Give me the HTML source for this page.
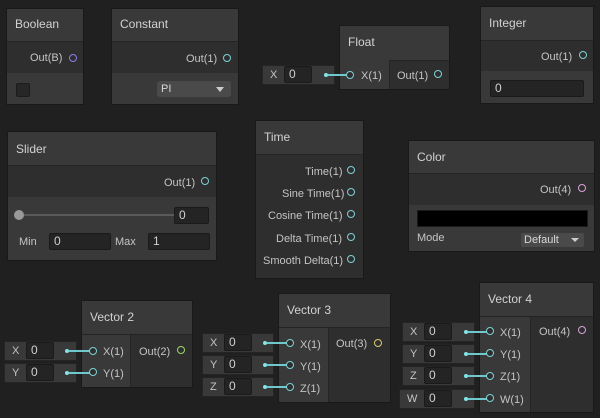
<!DOCTYPE html>
<html><head><meta charset="utf-8"><style>
*{box-sizing:border-box;margin:0;padding:0}
body{width:600px;height:418px;background:#202020;position:relative;overflow:hidden;font-family:"Liberation Sans",sans-serif;font-size:11px;color:#c4c4c4}
.a{position:absolute}
.node{position:absolute;background:#2e2e2e;border:1px solid #191919;z-index:1}
.hd{position:absolute;left:0;right:0;top:0;background:#393939;border-bottom:1px solid #242424;font-size:12px;color:#d2d2d2;padding-left:8px}
.ext{position:absolute;left:0;right:0;bottom:0;background:#393939}
.inc{position:absolute;left:0;bottom:0;background:#393939;border-right:1px solid #242424}
.t{position:absolute;white-space:nowrap;line-height:12px;z-index:3}
.pc{position:absolute;width:8px;height:8px;border-radius:50%;border:1.5px solid #7fd2d6;z-index:4;background:#2e2e2e}
.fld{position:absolute;background:#242424;border:1px solid #1a1a1a;border-radius:2px;padding-left:4px;color:#d0d0d0;font-size:12px;z-index:3}
.inp{position:absolute;background:#393939;border:1px solid #242424;height:20px}
.dot{position:absolute;width:4px;height:4px;border-radius:50%;background:#84e4e7;z-index:3}
.ln{position:absolute;height:2px;background:#6fc9cc;z-index:3}
</style></head><body>

<!-- Boolean -->
<div class="node" style="left:6px;top:8px;width:78px;height:97px">
<div class="hd" style="height:33px;line-height:31px">Boolean</div>
<div class="ext" style="height:31px"></div>
<div class="a" style="left:9px;top:74px;width:14px;height:14px;background:#272727;border:1px solid #1c1c1c;border-radius:2px"></div>
</div>
<div class="t" style="left:30px;top:52px">Out(B)</div>
<div class="pc" style="left:69px;top:54px;border-color:#8c7fe6"></div>

<!-- Constant -->
<div class="node" style="left:111px;top:8px;width:128px;height:97px">
<div class="hd" style="height:33px;line-height:31px">Constant</div>
<div class="ext" style="height:31px"></div>
<div class="a" style="left:45px;top:72px;width:74px;height:16px;background:#4a4a4a;border-radius:3px;padding-left:4px;line-height:16px;color:#d8d8d8">PI<span class="a" style="right:7px;top:6px;border-left:4px solid transparent;border-right:4px solid transparent;border-top:5px solid #ccc"></span></div>
</div>
<div class="t" style="left:186px;top:53px">Out(1)</div>
<div class="pc" style="left:223px;top:54px"></div>

<!-- Float -->
<div class="inp" style="left:262px;top:65px;width:73px"></div>
<div class="t" style="left:270px;top:69px">X</div>
<div class="fld" style="left:284px;top:66px;width:28px;height:17px;line-height:15px">0</div>
<div class="dot" style="left:324px;top:73px"></div>
<div class="ln" style="left:328px;top:74px;width:19px"></div>
<div class="node" style="left:339px;top:25px;width:111px;height:65px">
<div class="hd" style="height:35px;line-height:33px">Float</div>
<div class="inc" style="width:50px;height:29px"></div>
</div>
<div class="pc" style="left:346px;top:71px"></div>
<div class="t" style="left:361px;top:70px">X(1)</div>
<div class="t" style="left:397px;top:70px">Out(1)</div>
<div class="pc" style="left:434px;top:70px"></div>

<!-- Integer -->
<div class="node" style="left:480px;top:6px;width:114px;height:98px">
<div class="hd" style="height:34px;line-height:32px">Integer</div>
<div class="ext" style="height:32px"></div>
<div class="fld" style="left:9px;top:73px;width:94px;height:17px;line-height:15px">0</div>
</div>
<div class="t" style="left:541px;top:51px">Out(1)</div>
<div class="pc" style="left:579px;top:51px"></div>

<!-- Slider -->
<div class="node" style="left:7px;top:131px;width:210px;height:130px">
<div class="hd" style="height:34px;line-height:34px">Slider</div>
<div class="ext" style="height:63px"></div>
<div class="a" style="left:10px;top:82px;width:156px;height:2px;background:#5a5a5a"></div>
<div class="a" style="left:6px;top:78px;width:10px;height:10px;border-radius:50%;background:#999"></div>
<div class="fld" style="left:166px;top:75px;width:35px;height:17px;line-height:15px">0</div>
<div class="t" style="left:11px;top:104px">Min</div>
<div class="fld" style="left:41px;top:101px;width:62px;height:17px;line-height:15px">0</div>
<div class="t" style="left:107px;top:104px">Max</div>
<div class="fld" style="left:140px;top:101px;width:62px;height:17px;line-height:15px">1</div>
</div>
<div class="t" style="left:164px;top:177px">Out(1)</div>
<div class="pc" style="left:201px;top:177px"></div>

<!-- Time -->
<div class="node" style="left:255px;top:120px;width:109px;height:159px">
<div class="hd" style="height:34px;line-height:33px">Time</div>
</div>
<div class="t" style="left:305px;top:166px">Time(1)</div>
<div class="t" style="left:282px;top:188px">Sine Time(1)</div>
<div class="t" style="left:268px;top:210px">Cosine Time(1)</div>
<div class="t" style="left:276px;top:233px">Delta Time(1)</div>
<div class="t" style="left:263px;top:255px">Smooth Delta(1)</div>
<div class="pc" style="left:347px;top:166px"></div>
<div class="pc" style="left:347px;top:188px"></div>
<div class="pc" style="left:347px;top:210px"></div>
<div class="pc" style="left:347px;top:233px"></div>
<div class="pc" style="left:347px;top:255px"></div>

<!-- Color -->
<div class="node" style="left:408px;top:140px;width:187px;height:112px">
<div class="hd" style="height:33px;line-height:33px">Color</div>
<div class="ext" style="height:46px"></div>
<div class="a" style="left:8px;top:69px;width:171px;height:17px;background:#000;border:1px solid #1a1a1a"></div>
<div class="t" style="left:8px;top:91px">Mode</div>
<div class="a" style="left:112px;top:92px;width:63px;height:14px;background:#4a4a4a;border-radius:2px;padding-left:3px;line-height:14px;color:#d8d8d8">Default<span class="a" style="right:5px;top:5px;border-left:4px solid transparent;border-right:4px solid transparent;border-top:4px solid #ccc"></span></div>
</div>
<div class="t" style="left:540px;top:184px">Out(4)</div>
<div class="pc" style="left:578px;top:184px;border-color:#d8a0d8"></div>

<!-- Vector 2 -->
<div class="inp" style="left:4px;top:341px;width:73px"></div>
<div class="t" style="left:12px;top:345px">X</div>
<div class="fld" style="left:26px;top:342px;width:28px;height:17px;line-height:15px">0</div>
<div class="dot" style="left:65px;top:349px"></div>
<div class="ln" style="left:69px;top:350px;width:21px"></div>
<div class="inp" style="left:4px;top:363px;width:73px"></div>
<div class="t" style="left:12px;top:367px">Y</div>
<div class="fld" style="left:26px;top:364px;width:28px;height:17px;line-height:15px">0</div>
<div class="dot" style="left:65px;top:371px"></div>
<div class="ln" style="left:69px;top:372px;width:21px"></div>
<div class="node" style="left:81px;top:300px;width:112px;height:88px">
<div class="hd" style="height:34px;line-height:33px">Vector 2</div>
<div class="inc" style="width:49px;height:52px"></div>
</div>
<div class="pc" style="left:89px;top:347px"></div>
<div class="pc" style="left:89px;top:368px"></div>
<div class="t" style="left:103px;top:346px">X(1)</div>
<div class="t" style="left:103px;top:368px">Y(1)</div>
<div class="t" style="left:139px;top:346px">Out(2)</div>
<div class="pc" style="left:177px;top:346px;border-color:#9cd66c"></div>

<!-- Vector 3 -->
<div class="inp" style="left:202px;top:333px;width:72px"></div>
<div class="t" style="left:210px;top:337px">X</div>
<div class="fld" style="left:224px;top:334px;width:28px;height:17px;line-height:15px">0</div>
<div class="dot" style="left:263px;top:341px"></div>
<div class="ln" style="left:267px;top:342px;width:21px"></div>
<div class="inp" style="left:202px;top:355px;width:72px"></div>
<div class="t" style="left:210px;top:359px">Y</div>
<div class="fld" style="left:224px;top:356px;width:28px;height:17px;line-height:15px">0</div>
<div class="dot" style="left:263px;top:363px"></div>
<div class="ln" style="left:267px;top:364px;width:21px"></div>
<div class="inp" style="left:202px;top:377px;width:72px"></div>
<div class="t" style="left:210px;top:381px">Z</div>
<div class="fld" style="left:224px;top:378px;width:28px;height:17px;line-height:15px">0</div>
<div class="dot" style="left:263px;top:385px"></div>
<div class="ln" style="left:267px;top:386px;width:21px"></div>
<div class="node" style="left:278px;top:293px;width:113px;height:110px">
<div class="hd" style="height:34px;line-height:33px">Vector 3</div>
<div class="inc" style="width:50px;height:74px"></div>
</div>
<div class="pc" style="left:286px;top:339px"></div>
<div class="pc" style="left:286px;top:361px"></div>
<div class="pc" style="left:286px;top:383px"></div>
<div class="t" style="left:300px;top:339px">X(1)</div>
<div class="t" style="left:300px;top:361px">Y(1)</div>
<div class="t" style="left:300px;top:383px">Z(1)</div>
<div class="t" style="left:336px;top:338px">Out(3)</div>
<div class="pc" style="left:374px;top:339px;border-color:#d8cc6c"></div>

<!-- Vector 4 -->
<div class="inp" style="left:402px;top:322px;width:73px"></div>
<div class="t" style="left:410px;top:326px">X</div>
<div class="fld" style="left:424px;top:323px;width:28px;height:17px;line-height:15px">0</div>
<div class="dot" style="left:464px;top:330px"></div>
<div class="ln" style="left:468px;top:331px;width:21px"></div>
<div class="inp" style="left:402px;top:344px;width:73px"></div>
<div class="t" style="left:410px;top:348px">Y</div>
<div class="fld" style="left:424px;top:345px;width:28px;height:17px;line-height:15px">0</div>
<div class="dot" style="left:464px;top:352px"></div>
<div class="ln" style="left:468px;top:353px;width:21px"></div>
<div class="inp" style="left:402px;top:366px;width:73px"></div>
<div class="t" style="left:410px;top:370px">Z</div>
<div class="fld" style="left:424px;top:367px;width:28px;height:17px;line-height:15px">0</div>
<div class="dot" style="left:464px;top:374px"></div>
<div class="ln" style="left:468px;top:375px;width:21px"></div>
<div class="inp" style="left:399px;top:389px;width:76px"></div>
<div class="t" style="left:407px;top:393px">W</div>
<div class="fld" style="left:424px;top:390px;width:28px;height:17px;line-height:15px">0</div>
<div class="dot" style="left:464px;top:397px"></div>
<div class="ln" style="left:468px;top:398px;width:21px"></div>
<div class="node" style="left:479px;top:282px;width:115px;height:131px">
<div class="hd" style="height:34px;line-height:33px">Vector 4</div>
<div class="inc" style="width:51px;height:95px"></div>
</div>
<div class="pc" style="left:486px;top:327px"></div>
<div class="pc" style="left:486px;top:349px"></div>
<div class="pc" style="left:486px;top:372px"></div>
<div class="pc" style="left:486px;top:394px"></div>
<div class="t" style="left:500px;top:327px">X(1)</div>
<div class="t" style="left:500px;top:349px">Y(1)</div>
<div class="t" style="left:500px;top:371px">Z(1)</div>
<div class="t" style="left:500px;top:394px">W(1)</div>
<div class="t" style="left:539px;top:326px">Out(4)</div>
<div class="pc" style="left:578px;top:326px;border-color:#d8a0d8"></div>

</body></html>
